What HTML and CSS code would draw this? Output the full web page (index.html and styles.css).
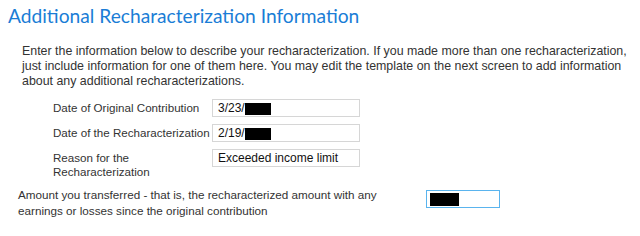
FILE: index.html
```html
<!DOCTYPE html>
<html lang="en">
<head>
    <meta charset="UTF-8">
    <title>Additional Recharacterization Information</title>
    <link rel="stylesheet" href="styles.css">
</head>
<body>
    <h2 class="page-title">Additional Recharacterization Information</h2>

    <p class="intro">
        Enter the information below to describe your recharacterization. If you made more than one recharacterization,<br>
        just include information for one of them here. You may edit the template on the next screen to add information<br>
        about any additional recharacterizations.
    </p>

    <div class="form-rows">
        <div class="form-row">
            <label class="row-label">Date of Original Contribution</label>
            <div class="field"><span>3/23/</span><span class="redact"></span></div>
        </div>
        <div class="form-row">
            <label class="row-label">Date of the Recharacterization</label>
            <div class="field"><span>2/19/</span><span class="redact"></span></div>
        </div>
        <div class="form-row">
            <label class="row-label">Reason for the<br>Recharacterization</label>
            <div class="field"><span>Exceeded income limit</span></div>
        </div>
    </div>

    <div class="amount-row">
        <label class="amount-label">Amount you transferred - that is, the recharacterized amount with any<br>earnings or losses since the original contribution</label>
        <div class="field amount-field focused"><span class="redact small"></span></div>
    </div>
</body>
</html>
```

FILE: styles.css
```css
body {
    margin: 0;
    background: #ffffff;
    font-family: "Liberation Sans", Arial, sans-serif;
    font-size: 12px;
    color: #333333;
}
.page-title {
    margin: 0;
    padding: 4px 0 0 8px;
    font-family: Lato, "Open Sans", sans-serif;
    font-weight: normal;
    font-size: 19.2px;
    line-height: 24px;
    color: #1a7dd6;
}
.intro {
    margin: 16px 0 0 22px;
    font-size: 12.4px;
    line-height: 15px;
    white-space: nowrap;
}
.form-rows {
    margin: 10px 0 0 53px;
    display: flex;
    flex-direction: column;
    gap: 7px;
}
.form-row {
    display: flex;
    align-items: flex-start;
}
.row-label {
    width: 159px;
    padding-top: 2px;
    line-height: 14px;
    font-size: 11.6px;
    white-space: nowrap;
}
.field {
    box-sizing: border-box;
    width: 148px;
    height: 18px;
    border: 1px solid #d6d6d6;
    padding: 1px 5px 0;
    display: flex;
    align-items: center;
    line-height: 15px;
    color: #111111;
}
.redact {
    display: inline-block;
    width: 26px;
    height: 12px;
    background: #000000;
}
.amount-row {
    margin: 8px 0 0 18px;
    display: flex;
    align-items: flex-start;
}
.amount-label {
    width: 408px;
    line-height: 16px;
    font-size: 11.7px;
    white-space: nowrap;
}
.amount-field {
    margin-top: 3px;
    width: 74px;
    height: 18px;
    padding: 1px 3px;
}
.focused {
    border-color: #5ab4ee;
}
.redact.small {
    width: 29px;
    height: 13px;
}
```
